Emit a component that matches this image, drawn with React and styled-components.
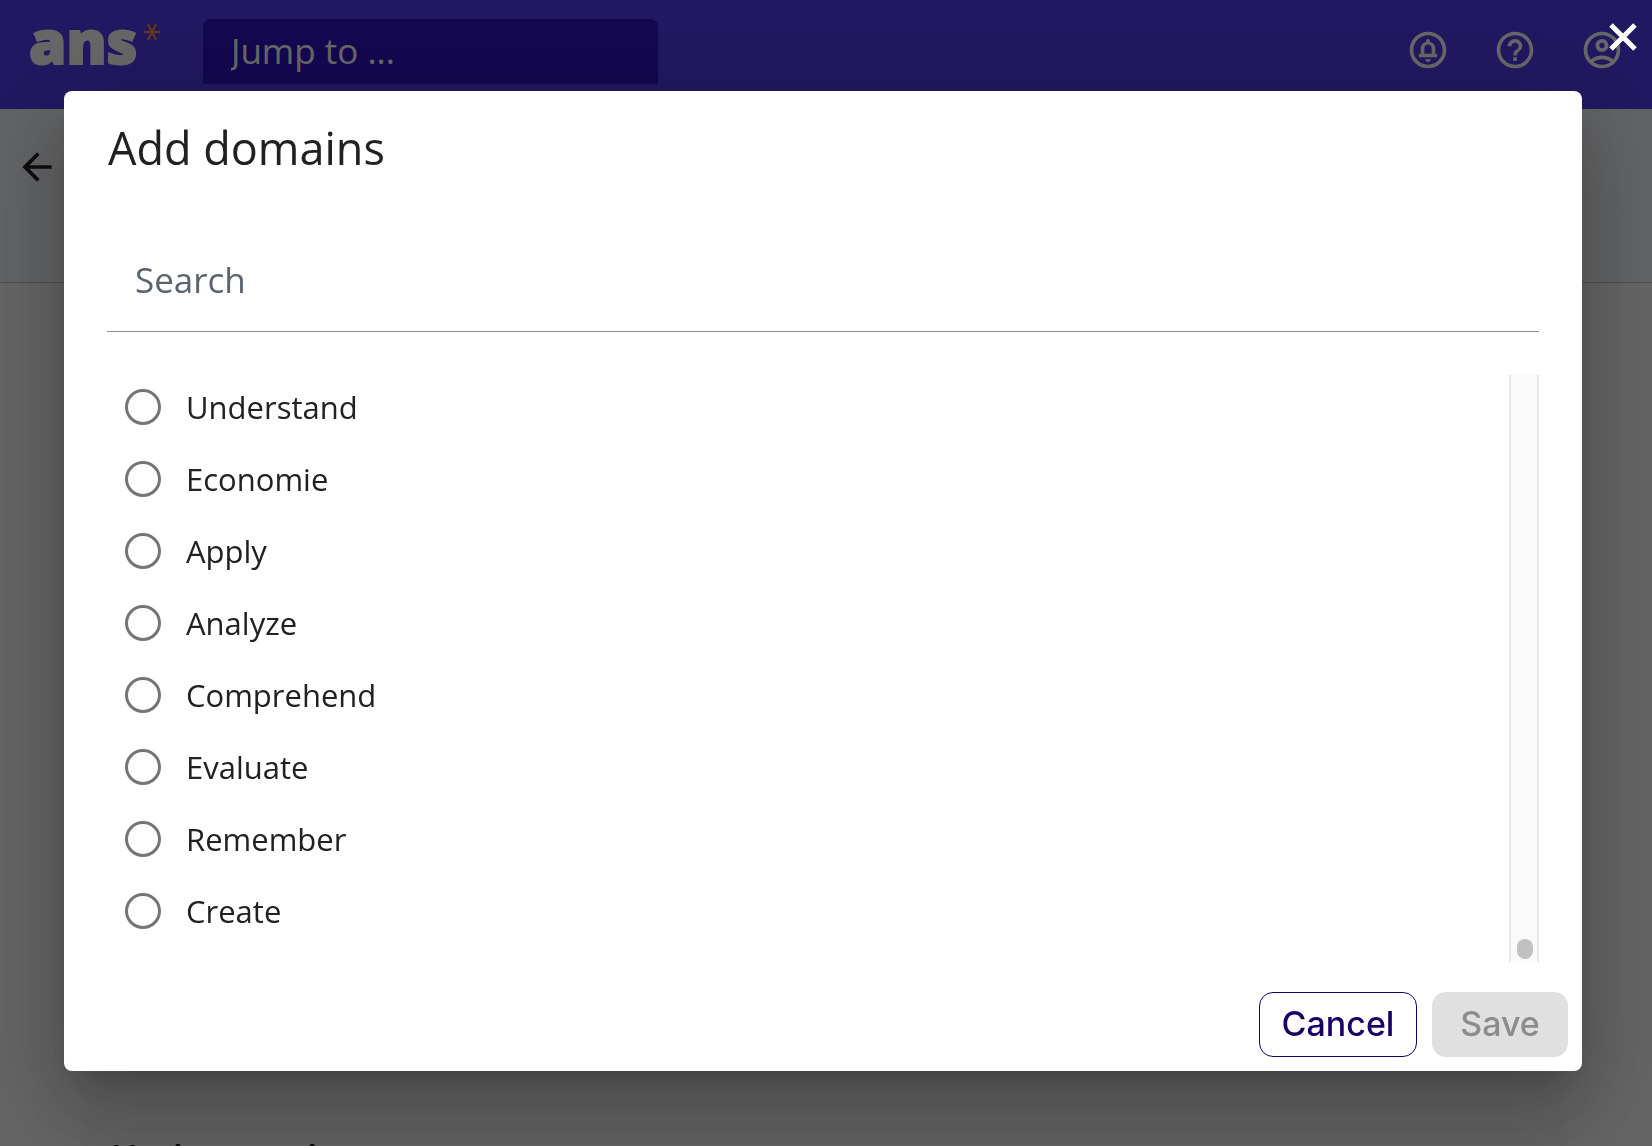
import React, { useState } from 'react'
import styled, { createGlobalStyle } from 'styled-components'

const domains = [
  'Understand',
  'Economie',
  'Apply',
  'Analyze',
  'Comprehend',
  'Evaluate',
  'Remember',
  'Create'
]

const App = () => {
  return <>
    <GlobalStyle/>
    <Page>
      <Navbar/>
      <SubHeader>
        <BackLink href="#back" aria-label="Back">
          <Icon size={44} viewBox="0 0 24 24"><path d="M20 11H7.83l5.59-5.59L12 4l-8 8 8 8 1.41-1.41L7.83 13H20v-2z"/></Icon>
        </BackLink>
      </SubHeader>
      <Content>
        <ContentCard>
          <CardTitle>Understand</CardTitle>
        </ContentCard>
      </Content>
    </Page>
    <Overlay>
      <CloseButton aria-label="Close">
        <svg width="28" height="28" viewBox="0 0 28 28"><path d="M2 2l24 24M26 2L2 26" stroke="#fff" strokeWidth="5"/></svg>
      </CloseButton>
      <DomainsDialog/>
    </Overlay>
  </>
}

const Navbar = () => {
  return <NavWrapper>
    <Logo>
      <LogoText>ans</LogoText>
      <svg width="18" height="18" viewBox="0 0 18 18"><path d="M1 9h16M5 1l8 16M13 1L5 17" stroke="#e08850" strokeWidth="2.4"/></svg>
    </Logo>
    <JumpInput type="text" aria-label="Jump to" placeholder="Jump to ..."/>
    <NavIcons>
      <IconButton aria-label="Notifications">
        <Icon size={44} viewBox="0 0 24 24"><path d="M12 18.5c.83 0 1.5-.67 1.5-1.5h-3c0 .83.67 1.5 1.5 1.5zM12 2C6.48 2 2 6.48 2 12s4.48 10 10 10 10-4.48 10-10S17.52 2 12 2zm0 18c-4.41 0-8-3.59-8-8s3.59-8 8-8 8 3.59 8 8-3.59 8-8 8zm4-8.61c0-1.86-1.28-3.41-3-3.86V7c0-.55-.45-1-1-1s-1 .45-1 1v.53c-1.72.45-3 2-3 3.86V14H7v2h10v-2h-1v-2.61zM14 14h-4v-3c0-1.1.9-2 2-2s2 .9 2 2v3z"/></Icon>
      </IconButton>
      <IconButton aria-label="Help">
        <Icon size={44} viewBox="0 0 24 24"><path d="M11 18h2v-2h-2v2zm1-16C6.48 2 2 6.48 2 12s4.48 10 10 10 10-4.48 10-10S17.52 2 12 2zm0 18c-4.41 0-8-3.59-8-8s3.59-8 8-8 8 3.59 8 8-3.59 8-8 8zm0-14c-2.21 0-4 1.79-4 4h2c0-1.1.9-2 2-2s2 .9 2 2c0 2-3 1.75-3 5h2c0-2.25 3-2.5 3-5 0-2.21-1.79-4-4-4z"/></Icon>
      </IconButton>
      <IconButton aria-label="Account">
        <Icon size={44} viewBox="0 0 24 24"><path d="M12 2C6.48 2 2 6.48 2 12s4.48 10 10 10 10-4.48 10-10S17.52 2 12 2zM7.35 18.5C8.66 17.56 10.26 17 12 17s3.34.56 4.65 1.5C15.34 19.44 13.74 20 12 20s-3.34-.56-4.65-1.5zm10.79-1.38C16.45 15.8 14.32 15 12 15s-4.45.8-6.14 2.12C4.7 15.73 4 13.95 4 12c0-4.42 3.58-8 8-8s8 3.58 8 8c0 1.95-.7 3.73-1.86 5.12zM12 6c-1.93 0-3.5 1.57-3.5 3.5S10.07 13 12 13s3.5-1.57 3.5-3.5S13.93 6 12 6zm0 5c-.83 0-1.5-.67-1.5-1.5S11.17 8 12 8s1.5.67 1.5 1.5S12.83 11 12 11z"/></Icon>
      </IconButton>
    </NavIcons>
  </NavWrapper>
}

const DomainsDialog = () => {
  const [query, setQuery] = useState('')
  const [selected, setSelected] = useState(null)
  const visible = domains.filter(name => name.toLowerCase().includes(query.toLowerCase()))
  return <Dialog role="dialog" aria-labelledby="dialog-title">
    <DialogTitle id="dialog-title">Add domains</DialogTitle>
    <DialogBody>
      <SearchInput
        type="text"
        aria-label="Search"
        placeholder="Search"
        value={query}
        onChange={e => setQuery(e.target.value)}
      />
      <ListWrapper>
        <List>
          {visible.map(name => (
            <DomainItem
              key={name}
              name={name}
              checked={selected === name}
              onSelect={() => setSelected(name)}
            />
          ))}
        </List>
        <ScrollTrack><ScrollThumb/></ScrollTrack>
      </ListWrapper>
    </DialogBody>
    <DialogActions>
      <CancelButton>Cancel</CancelButton>
      <SaveButton disabled={!selected}>Save</SaveButton>
    </DialogActions>
  </Dialog>
}

const DomainItem = ({ name, checked, onSelect }) => {
  return <ItemLabel>
    <Radio type="radio" name="domain" checked={checked} onChange={onSelect}/>
    {name}
  </ItemLabel>
}

const GlobalStyle = createGlobalStyle`
  * {
    box-sizing: border-box;
  }
  body {
    margin: 0;
    overflow: hidden;
    font-family: "Open Sans", "Noto Sans", sans-serif;
    color: #212121;
  }
  button, input {
    font-family: inherit;
  }
`

const Page = styled.div`
  display: flex;
  flex-direction: column;
  height: 100vh;
  overflow: hidden;
  background-color: #fafafa;
`

const NavWrapper = styled.header`
  display: flex;
  align-items: flex-start;
  flex: none;
  height: 109px;
  padding: 19px 28px 0 29px;
  background-color: #523cf0;
`

const Logo = styled.div`
  display: flex;
  align-items: flex-start;
  width: 174px;
  gap: 5px;
  padding-top: 4px;
`

const LogoText = styled.span`
  font-weight: 800;
  font-size: 60px;
  line-height: 36px;
  color: #fff;
  -webkit-text-stroke: 2px #fff;
`

const JumpInput = styled.input`
  width: 455px;
  height: 65px;
  padding: 0 28px 2px;
  border: 0;
  border-radius: 8px 8px 0 0;
  background-color: #3014c4;
  font-size: 35px;
  color: #fff;
  &::placeholder {
    color: #fff;
    opacity: 1;
  }
`

const NavIcons = styled.div`
  display: flex;
  gap: 43px;
  margin-left: auto;
  padding-top: 9px;
`

const IconButton = styled.button`
  display: flex;
  padding: 0;
  border: 0;
  background: none;
  color: #fff;
  cursor: pointer;
`

const Icon = styled.svg`
  width: ${({ size }) => size}px;
  height: ${({ size }) => size}px;
  fill: currentColor;
`

const SubHeader = styled.div`
  flex: none;
  height: 174px;
  padding: 36px 15px;
  background-color: #f5f7fa;
  border-bottom: 1px solid #c4cad0;
`

const BackLink = styled.a`
  display: inline-flex;
  color: #212121;
`

const Content = styled.main`
  display: flex;
  flex-direction: column;
  justify-content: flex-end;
  flex: 1;
  padding: 0 85px 0 81px;
`

const ContentCard = styled.section`
  height: 46px;
  padding: 36px 30px 0;
  border-radius: 8px 8px 0 0;
  background-color: #f5f5f5;
`

const CardTitle = styled.h2`
  margin: 0;
  font-weight: 600;
  font-size: 36px;
  line-height: 44px;
`

const Overlay = styled.div`
  position: fixed;
  inset: 0;
  display: flex;
  align-items: center;
  padding: 0 70px 0 64px;
  background-color: rgba(0, 0, 0, 0.6);
`

const CloseButton = styled.button`
  position: absolute;
  top: 23px;
  right: 15px;
  display: flex;
  padding: 0;
  border: 0;
  background: none;
  cursor: pointer;
`

const Dialog = styled.div`
  flex: 1;
  margin-top: 16px;
  border-radius: 8px;
  background-color: #fff;
  box-shadow: 0 22px 30px -14px rgba(0, 0, 0, 0.2), 0 48px 76px 6px rgba(0, 0, 0, 0.14), 0 18px 92px 16px rgba(0, 0, 0, 0.12);
`

const DialogTitle = styled.h1`
  margin: 0;
  padding: 27px 44px 29px;
  font-weight: 400;
  font-size: 45px;
  line-height: 60px;
`

const DialogBody = styled.div`
  padding: 24px 43px 0;
`

const SearchInput = styled.input`
  display: block;
  width: 100%;
  height: 101px;
  padding: 0 28px 4px;
  border: 0;
  border-bottom: 1px solid #8c8c8c;
  font-size: 35px;
  color: #212121;
  &::placeholder {
    color: #5c6370;
    opacity: 1;
  }
`

const ListWrapper = styled.div`
  display: flex;
  height: 587px;
  margin-top: 43px;
`

const List = styled.div`
  flex: 1;
`

const ItemLabel = styled.label`
  display: flex;
  align-items: center;
  gap: 25px;
  height: 72px;
  padding-left: 18px;
  font-size: 31px;
  cursor: pointer;
  &:first-child {
    margin-top: -4px;
  }
`

const Radio = styled.input`
  appearance: none;
  width: 36px;
  height: 36px;
  margin: 0;
  border: 3px solid #757575;
  border-radius: 50%;
  &:checked {
    border: 10px solid #1a0066;
  }
`

const ScrollTrack = styled.div`
  display: flex;
  flex-direction: column;
  justify-content: flex-end;
  width: 30px;
  padding: 0 4px 3px 6px;
  border: 2px solid #e8e8e8;
  border-width: 0 2px;
  background-color: #fafafa;
`

const ScrollThumb = styled.div`
  height: 20px;
  border-radius: 8px;
  background-color: #c1c1c1;
`

const DialogActions = styled.div`
  display: flex;
  justify-content: flex-end;
  gap: 15px;
  padding: 30px 14px 14px;
`

const Button = styled.button`
  height: 65px;
  padding: 0 20px 2px;
  border: 0;
  border-radius: 14px;
  font-family: Inter, sans-serif;
  font-weight: 500;
  font-size: 34px;
`

const CancelButton = styled(Button)`
  min-width: 158px;
  border: 1px solid #1a0066;
  background-color: #fff;
  color: #1a0066;
  cursor: pointer;
`

const SaveButton = styled(Button)`
  min-width: 136px;
  background-color: #1a0066;
  color: #fff;
  &:disabled {
    background-color: #e0e0e0;
    color: #8c8c8c;
  }
`

export default App
